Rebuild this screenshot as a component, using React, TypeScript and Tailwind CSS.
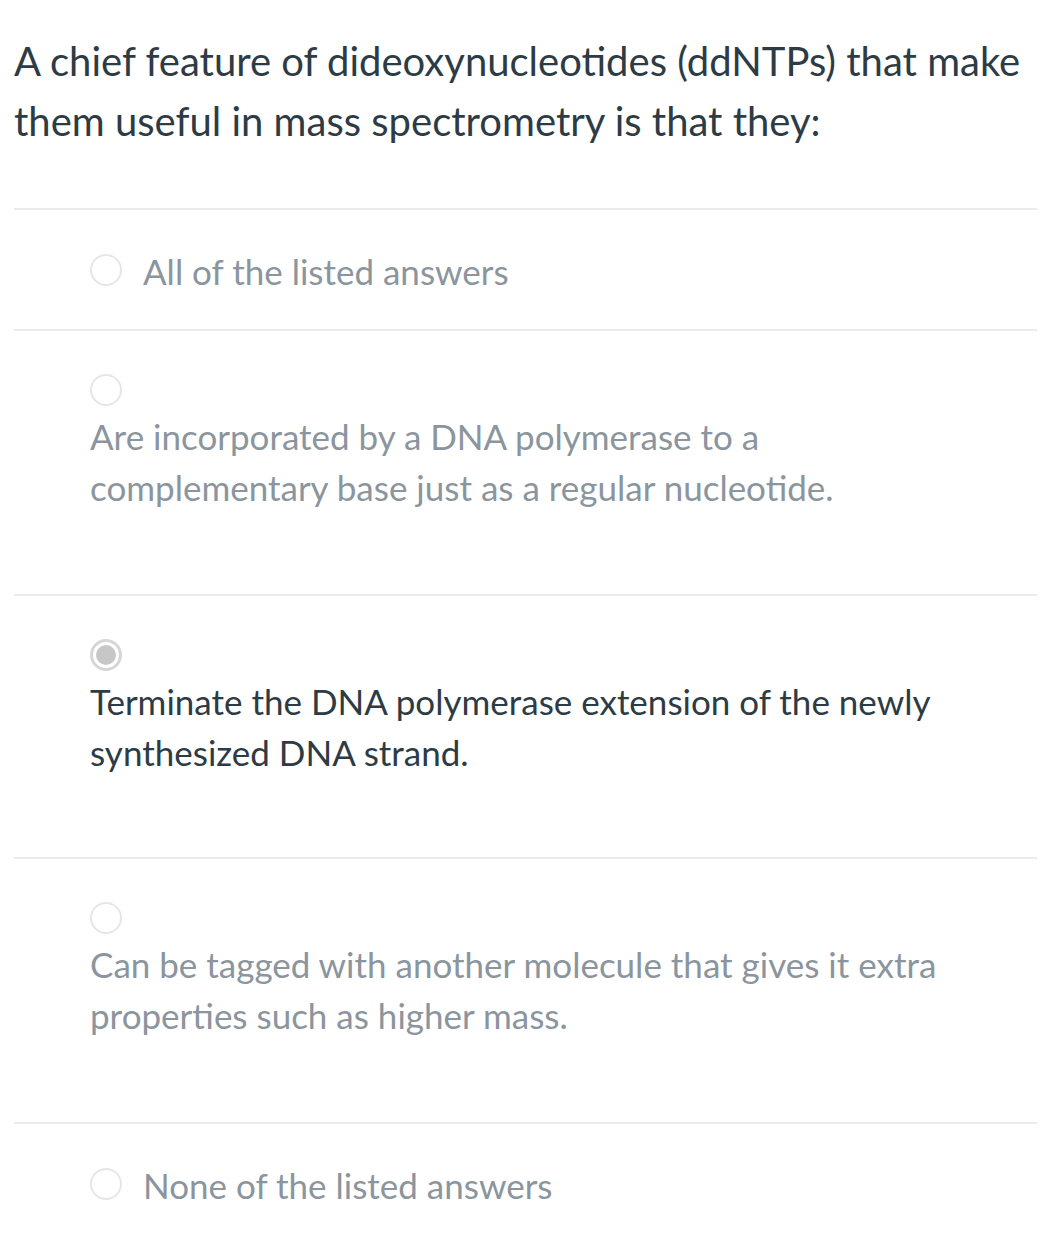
import React from "react";

type Option = { text: string; inline?: boolean; selected?: boolean; h?: string };

const options: Option[] = [
  { text: "All of the listed answers", inline: true },
  {
    text: "Are incorporated by a DNA polymerase to a complementary base just as a regular nucleotide.",
    h: "h-[263px]",
  },
  {
    text: "Terminate the DNA polymerase extension of the newly synthesized DNA strand.",
    selected: true,
    h: "h-[261px]",
  },
  {
    text: "Can be tagged with another molecule that gives it extra properties such as higher mass.",
    h: "h-[263px]",
  },
  { text: "None of the listed answers", inline: true },
];

function Radio({ selected }: { selected?: boolean }) {
  if (selected) {
    return (
      <span className="flex h-[32px] w-[32px] shrink-0 items-center justify-center rounded-full border-[3px] border-[#d6d6d6] bg-white">
        <span className="h-[20px] w-[20px] rounded-full bg-[#c7c7c7]" />
      </span>
    );
  }
  return <span className="block h-[32px] w-[32px] shrink-0 rounded-full border-2 border-[#e6e6e6] bg-white" />;
}

export default function App() {
  return (
    <div className="min-h-[1255px] bg-white font-['Lato','Liberation_Sans',sans-serif]">
      <h1 className="px-[14px] pt-[31px] text-[40px] leading-[60px] text-[#2d3b45]">
        A chief feature of dideoxynucleotides (ddNTPs) that make them useful in mass spectrometry is that they:
      </h1>

      <div className="mx-[14px] mt-[57px] mr-[13px]">
        {options.map((o, i) => (
          <div key={i} className="border-t-2 border-[#ebebeb]">
            {o.inline ? (
              <div className="flex h-[119px] items-center gap-[21px] pl-[76px]">
                <Radio selected={o.selected} />
                <span className="pt-[4px] text-[35px] leading-[51px] text-[#8b959e]">{o.text}</span>
              </div>
            ) : (
              <div className={`${o.h} pl-[76px] pt-[43px]`}>
                <Radio selected={o.selected} />
                <p
                  className={`mt-[5px] max-w-[870px] text-[35px] leading-[51px] ${
                    o.selected ? "text-[#2d3b45]" : "text-[#8b959e]"
                  }`}
                >
                  {o.text}
                </p>
              </div>
            )}
          </div>
        ))}
      </div>
    </div>
  );
}
